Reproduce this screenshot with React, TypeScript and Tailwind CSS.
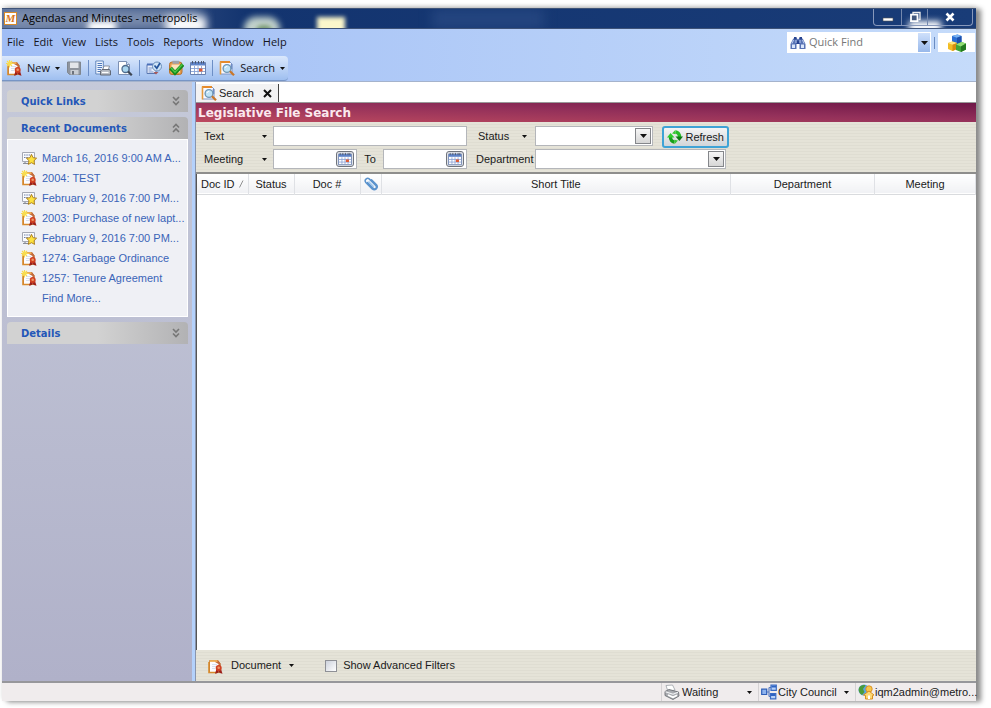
import React from "react";

const menus = ["File", "Edit", "View", "Lists", "Tools", "Reports", "Window", "Help"];

const recent = [
  { kind: "meeting", label: "March 16, 2016 9:00 AM A..." },
  { kind: "doc", label: "2004: TEST" },
  { kind: "meeting", label: "February 9, 2016 7:00 PM..." },
  { kind: "doc", label: "2003: Purchase of new lapt..." },
  { kind: "meeting", label: "February 9, 2016 7:00 PM..." },
  { kind: "doc", label: "1274: Garbage Ordinance" },
  { kind: "doc", label: "1257: Tenure Agreement" },
];

function Caret() {
  return (
    <svg className="h-[3px] w-[5px] shrink-0" viewBox="0 0 5 3">
      <path d="M0 0h5L2.5 3z" fill="#111" />
    </svg>
  );
}

function NewDocIcon({ spark = true }: { spark?: boolean }) {
  return (
    <svg className="size-4 shrink-0" viewBox="0 0 16 16">
      <path d="M2.500 2.500h8l2.500 3v9H2.500z" fill="#fdfcff" stroke="#b9763a" />
      <path d="M2 4v10.500h8" fill="none" stroke="#d88a2c" strokeWidth="1.600" />
      <path d="M8 2h3l2.500 3.500V10h-2V6L8 4z" fill="#c26a3a" />
      <path d="M2.500 3h8" stroke="#efb25a" strokeWidth="1.800" />
      <path d="M5 6.500h5M5 8.500h4M5 10.500h3" stroke="#cdd7ea" strokeWidth=".8" />
      <path d="M9.500 11L8 15.800l2.600-.8 1.200-1.500 1.200 1.500 2.500.8-1.500-4.800z" fill="#9c1f1a" />
      <circle cx="11.700" cy="10" r="3" fill="#cf4022" />
      <circle cx="11.700" cy="9.700" r="1.300" fill="#ee9668" />
      {spark && (
        <g>
          <circle cx="3.500" cy="3.500" r="2.200" fill="#fff6b0" />
          <path d="M3.500 0v7.500M0 3.500h7.500M1 1l5 5M6 1L1 6" stroke="#f8dc4e" strokeWidth="1.100" />
        </g>
      )}
    </svg>
  );
}

function MeetingIcon() {
  return (
    <svg className="size-4 shrink-0" viewBox="0 0 16 16">
      <path d="M1.500 2.500h12v9h-12z" fill="#fafbfd" stroke="#a5a8b2" />
      <path d="M3 5h7M3 7.500h4" stroke="#6c7ea5" strokeDasharray="1.500 .8" />
      <path d="M2 13.500h6M4 12v2" stroke="#8a8d98" strokeWidth="1.200" />
      <path
        d="M10.500 4.300l1.600 3.400 3.500.5-2.600 2.500.6 3.700-3.100-1.700-3.200 1.700.7-3.700-2.600-2.500 3.500-.5z"
        fill="#fde23f"
        stroke="#a8781a"
        strokeWidth=".9"
      />
    </svg>
  );
}

function SaveIcon() {
  return (
    <svg className="size-4 shrink-0" viewBox="0 0 16 16">
      <path d="M1.500 2h13v12.500h-11l-2-2z" fill="#8f959e" stroke="#7f868f" />
      <path d="M4 2.500h8.500V8H4z" fill="#e3e6ea" />
      <path d="M4.500 10h8v4.500h-8z" fill="#c9cdd3" />
      <path d="M6 11h2v3.500H6z" fill="#6c727c" />
    </svg>
  );
}

function PrintDocIcon() {
  return (
    <svg className="size-4 shrink-0" viewBox="0 0 16 16">
      <path d="M.8 1h7.500v13H.8z" fill="#eef4fd" stroke="#6287bd" />
      <path d="M2.500 3.500H7M2.500 5.500H7M2.500 7.500H7M2.500 9.500H6M2.500 11.500H5" stroke="#4f79bb" />
      <path d="M9 6h5.500l-1.500 4.500H7.500z" fill="#fff" stroke="#777e8a" strokeWidth=".8" />
      <path d="M5.500 11l1.500-1.500h7.500l1 1.500v4h-10z" fill="#b4b9c1" stroke="#59606c" strokeWidth=".9" />
      <path d="M7 12.500h6.500" stroke="#fff" strokeWidth="1.200" />
    </svg>
  );
}

function PreviewIcon() {
  return (
    <svg className="size-4 shrink-0" viewBox="0 0 16 16">
      <path d="M1.500 1.500h8l3 3v10h-11z" fill="#fff" stroke="#7c90b3" />
      <path d="M9.500 1.500v3h3" fill="#d7e3f5" stroke="#7d95bd" />
      <circle cx="8.500" cy="9" r="3.500" fill="#a9d6f0" stroke="#4f6c8e" strokeWidth="1.300" />
      <path d="M11 11.500l3.800 3.800" stroke="#3d4654" strokeWidth="2.200" />
    </svg>
  );
}

function SearchDocIcon() {
  return (
    <svg className="size-4 shrink-0" viewBox="0 0 16 16">
      <path d="M1.500 1.500h9l2.500 2.500v10H1.500z" fill="#fbfaff" stroke="#7c95c6" />
      <path d="M1 2h10" stroke="#e58a2a" strokeWidth="2" />
      <path d="M1.500 1.500v13" stroke="#e59a3c" strokeWidth="1.600" />
      <path d="M12.500 4v5" stroke="#6f8cc6" strokeWidth="1.600" />
      <circle cx="8" cy="8.500" r="3.900" fill="#bfe3f7" stroke="#6f97b5" strokeWidth="1.400" />
      <path d="M6 8a2.300 2.300 0 0 1 2.300-1.800" fill="none" stroke="#fff" />
      <path d="M11 11.200L15 15.200" stroke="#c9772a" strokeWidth="2.300" />
    </svg>
  );
}

function ClockCheckIcon() {
  return (
    <svg className="size-4 shrink-0" viewBox="0 0 16 16">
      <path d="M1 4.500h9v9H1z" fill="#e8eefb" stroke="#5a77b0" />
      <path d="M1 4.500h9" stroke="#4a6fb9" strokeWidth="2" />
      <path d="M2.500 8h4M2.500 10h3M2.500 12h5" stroke="#7d97cb" />
      <circle cx="11" cy="6.500" r="4.500" fill="#cfe4f7" stroke="#6a8fb9" />
      <path d="M8.500 5.500l2.300 2.700 3.200-5.200" fill="none" stroke="#24549b" strokeWidth="1.700" />
      <path d="M7.500 12l2.500 2.500 2.500-2.500z" fill="#a85a5a" />
    </svg>
  );
}

function ApproveIcon() {
  return (
    <svg className="size-4 shrink-0" viewBox="0 0 16 16">
      <rect x="1.500" y="2" width="12.500" height="12.500" rx="2.500" fill="#e49a4a" stroke="#b97430" />
      <path d="M3.500 4.500h8.500v8H3.500z" fill="#fbe3bd" />
      <path d="M4.500.8h6.500v3H4.500z" fill="#a0a3ab" />
      <path d="M2.500 8l4.500 5 8-8.500" fill="none" stroke="#178a1e" strokeWidth="3.800" />
      <path d="M3 8l4 4.200 7.500-8" fill="none" stroke="#4cc848" strokeWidth="1.400" />
    </svg>
  );
}

function CalendarIcon({ className = "size-4" }: { className?: string }) {
  return (
    <svg className={"shrink-0 " + className} viewBox="0 0 16 16">
      <path d="M.5 2.500h15v12H.5z" fill="#fff" stroke="#6a80ae" />
      <path d="M1 2.500h14v3H1z" fill="#5d83c9" />
      <path d="M2.500 1v2.500M5.500 1v2.500M8.500 1v2.500M11.500 1v2.500M13.500 1v2.500" stroke="#464e60" strokeWidth=".9" />
      <path d="M1 8.500h14M1 11.500h14M4.500 6v8M8 6v8M11.500 6v8" stroke="#87a0d4" strokeWidth=".9" />
      <path d="M9 8.500h3.500v3H9z" fill="#dd5a35" />
    </svg>
  );
}

function BinocularsIcon() {
  return (
    <svg className="size-4 shrink-0" viewBox="0 0 16 16">
      <path d="M3 4L5.500 2 8 4.500 10.500 2 13 4l2.500 5v5H9.500V9h-3v5H.5V9z" fill="#5873b4" />
      <path d="M4 2h2.500v2.500H4zM9.500 2H12v2.500H9.500zM6.500 5.500h3V9h-3z" fill="#27438f" />
      <path d="M2 9.500h3V13H2zM11 9.500h3V13h-3z" fill="#dbe7fb" />
      <path d="M3.500 5l-1.500 3.500M12.500 5l1.500 3.500M6 5v3M10 5v3" stroke="#b8caee" />
    </svg>
  );
}

function CubesIcon() {
  return (
    <svg className="size-5 shrink-0" viewBox="0 0 20 20">
      <path d="M5 3L10.500 1.500l4 1.500v6.500L10 11l-5-1.500z" fill="#2b6fd4" />
      <path d="M5 3L10.500 1.500l4 1.500L10 4.700z" fill="#7ab2f2" />
      <path d="M10 4.700V11l4.500-1.500V3z" fill="#1b4fac" />
      <path d="M1 10l4.500-1.500L10 10v6l-4.500 2L1 16z" fill="#f2bd25" />
      <path d="M1 10l4.500-1.500L10 10l-4.500 1.800z" fill="#ffe883" />
      <path d="M5.500 11.800V18L10 16v-6z" fill="#d58c12" />
      <path d="M9 11.500l5.500-2.500 4.500 1.500v6L14 19l-5-2z" fill="#3fa535" />
      <path d="M9 11.500l5.500-2.500 4.500 1.500-5 3z" fill="#93dd74" />
      <path d="M14 13.500V19l5-2.500v-6z" fill="#23791f" />
    </svg>
  );
}

function PaperclipIcon() {
  return (
    <svg className="size-4 shrink-0" viewBox="0 0 16 16">
      <path
        d="M4.500 6.500l5.800 5.800c1.800 1.600 4.200-.6 2.700-2.600L6.200 2.900C4.200 1.200.8 4 2.800 6.500l6.400 6.400c2.800 2.400 6.600-1 4.300-4.200L8.500 3.700"
        fill="none"
        stroke="#5b93cd"
        strokeWidth="1.500"
        strokeLinecap="round"
      />
      <path d="M5.500 5.500l5.200 5.200" stroke="#9cc6ee" strokeWidth="1.400" />
    </svg>
  );
}

function RefreshIcon() {
  return (
    <svg className="size-4 shrink-0" viewBox="0 0 16 16">
      <path d="M7.500 13.200A5 5 0 0 1 3.500 8" fill="none" stroke="#16a01a" strokeWidth="3.400" />
      <path d="M8.500 2.800A5 5 0 0 1 12.500 8" fill="none" stroke="#28bd28" strokeWidth="3.400" />
      <path d="M0 8.500L3.600 4l3.900 4.500z" fill="#2ccc2c" />
      <path d="M8.500 7.500l3.900 4.500L16 7.500z" fill="#0d7a13" />
      <path d="M5 4.500L8.500.8v4.400zM11 11.500l-3.500 3.700v-4.400z" fill="#39c836" />
    </svg>
  );
}

function PrinterIcon() {
  return (
    <svg className="size-4 shrink-0" viewBox="0 0 16 16">
      <path d="M2 1.500L8.500 1 11 6 4 7.500z" fill="#fff" stroke="#9b9fa6" strokeWidth=".8" />
      <path d="M1 7.500l4-2 9.500 2.500.5 4-6 3.500-8-4z" fill="#a9abb0" stroke="#6d7076" strokeWidth=".9" />
      <path d="M1.500 7.700L9 10.200l5-2" fill="none" stroke="#f4f5f7" strokeWidth="1.200" />
      <path d="M4 11l5 2.200 4-2" fill="none" stroke="#fff" strokeWidth="1.800" />
    </svg>
  );
}

function OrgIcon() {
  return (
    <svg className="size-4 shrink-0" viewBox="0 0 16 16">
      <path d="M5 8h3M8 3.500v9M8 3.500h2M8 12.500h2" fill="none" stroke="#5a7cc0" strokeWidth="1.200" />
      <path d="M.7 5.200h5v5.300h-5z" fill="#8fb4ee" stroke="#2f5fb8" strokeWidth="1.200" />
      <path d="M10 1h5.300v5.300H10zM9.500 9.500h5.300v5.300H9.500z" fill="#b9d2f8" stroke="#3a6bc3" strokeWidth="1.200" />
      <path d="M10.500 1.500h4.500v2h-4.500zM10 10h4.500v2H10z" fill="#2f63c2" />
    </svg>
  );
}

function UserGlobeIcon() {
  return (
    <svg className="size-4 shrink-0" viewBox="0 0 16 16">
      <circle cx="6" cy="6" r="5.500" fill="#5ba6e2" />
      <path d="M1 4C2.500 1 6 .5 7.500 1.500L5 5l1.500 3L4 11C1.500 9.500 0 6.500 1 4z" fill="#4a9c3a" />
      <circle cx="11" cy="5" r="3.200" fill="#f7c64a" stroke="#d78b1c" strokeWidth=".9" />
      <path d="M5.500 11L11 7l5 4-1.500.5v3.500h-7v-3.500z" fill="#fbd873" stroke="#d98f1e" />
      <path d="M10 11.500h2V15h-2z" fill="#fff" />
    </svg>
  );
}

function Chevrons({ up = false }: { up?: boolean }) {
  return (
    <svg className="h-3 w-2 shrink-0" viewBox="0 0 8 12">
      <path
        d={up ? "M1 5.500l3-3 3 3M1 10l3-3 3 3" : "M1 2l3 3 3-3M1 6.500l3 3 3-3"}
        fill="none"
        stroke="#777"
        strokeWidth="1.600"
      />
    </svg>
  );
}

function PanelHeader({ title, open = false }: { title: string; open?: boolean }) {
  return (
    <button className="flex h-[22px] w-full items-center justify-between rounded-t-sm bg-linear-to-r from-[#d2d2d2] from-50% to-[#b2b2b4] pl-[14px] pr-2 font-['DejaVu_Sans'] text-[10px] font-bold text-[#2457b8]">
      {title}
      <Chevrons up={open} />
    </button>
  );
}

function Separator() {
  return <span className="h-4 w-px shrink-0 bg-[#6d8fc6]" />;
}

function ToolButton({ label, children }: { label: string; children: React.ReactNode }) {
  return (
    <button aria-label={label} title={label}>
      {children}
    </button>
  );
}

function LabelMenu({ label }: { label: string }) {
  return (
    <button className="flex w-full items-center justify-between">
      {label}
      <Caret />
    </button>
  );
}

function DropDown({ label, className }: { label: string; className: string }) {
  return (
    <div className={"relative h-5 " + className}>
      <select
        aria-label={label}
        className="h-full w-full appearance-none border border-[#b4b6ba] bg-white"
      >
        <option></option>
      </select>
      <span className="pointer-events-none absolute inset-y-[2px] right-[2px] flex w-4 items-center justify-center border border-[#84868a] bg-linear-to-b from-[#f6f6f6] to-[#d6d6d6]">
        <svg className="h-1 w-[7px]" viewBox="0 0 7 4">
          <path d="M0 0h7L3.500 4z" fill="#111" />
        </svg>
      </span>
    </div>
  );
}

function DateBox({ label }: { label: string }) {
  return (
    <div className="flex h-5 w-[84px] items-center border border-[#b4b6ba] bg-white pr-[2px]">
      <input aria-label={label} className="h-full w-0 flex-1 px-1 outline-none" />
      <button
        aria-label={"Pick " + label}
        className="flex h-4 w-[18px] items-center justify-center rounded-[3px] border border-[#70747c] bg-[#dfe2e8]"
      >
        <CalendarIcon className="size-[14px]" />
      </button>
    </div>
  );
}

function TitleBar() {
  return (
    <header className="relative flex h-[21px] items-center overflow-hidden border-y border-[#3e5378] bg-linear-to-r from-[#5f749c] via-[#13346f] via-25% to-[#193c78]">
      <span className="absolute top-0 left-2 h-5 w-48 bg-[#8393b2]/90 blur-[6px]" />
      <span className="absolute top-3 left-[86px] h-3 w-7 bg-white blur-[3px]" />
      <span className="absolute top-2 left-[164px] h-4 w-10 bg-white blur-[4px]" />
      <span className="absolute top-2 left-[242px] h-6 w-9 rounded-full bg-[#c3d2cc] blur-[3px]" />
      <span className="absolute top-4 left-[254px] h-3 w-4 rounded-full bg-[#7a9b74] blur-[2px]" />
      <span className="absolute top-2 left-[315px] h-4 w-7 bg-[#fbf7cb] blur-[2px]" />
      <span className="absolute top-0 left-[430px] h-5 w-28 bg-[#24457f] blur-[6px]" />
      <span className="relative ml-[2px] flex size-[13px] items-center justify-center border border-[#d98b2a] bg-white font-['Liberation_Serif'] text-[11px] leading-none font-bold text-[#d9761a] italic">
        M
      </span>
      <h1 className="relative ml-[5px] text-[11px] text-black">Agendas and Minutes - metropolis</h1>
      <div className="relative mr-[3px] ml-auto flex h-full items-start">
        <span className="absolute top-3 left-9 h-3 w-8 bg-white blur-[3px]" />
        <div className="relative flex h-[17px] divide-x divide-[#7488ae] rounded-b border border-t-0 border-[#8798bb]">
          <button aria-label="Minimize" className="flex w-7 items-center justify-center">
            <svg className="h-3 w-3" viewBox="0 0 12 12">
              <path d="M1 7h10v3H1z" fill="#fff" stroke="#555" strokeWidth=".6" />
            </svg>
          </button>
          <button aria-label="Restore" className="flex w-[26px] items-center justify-center">
            <svg className="h-3 w-3" viewBox="0 0 12 12">
              <path d="M4 3V1.500h7v7H9.500" fill="none" stroke="#eee" strokeWidth="1.300" />
              <path d="M2 3.700h6.500v6.500H2z" fill="#43597f" stroke="#fff" strokeWidth="1.800" />
            </svg>
          </button>
          <button aria-label="Close" className="flex w-[44px] items-center justify-center">
            <svg className="h-3 w-3" viewBox="0 0 12 12">
              <path d="M2.500 2.500l7 7M9.500 2.500l-7 7" stroke="#fff" strokeWidth="2.600" />
            </svg>
          </button>
        </div>
      </div>
    </header>
  );
}

function TopBars() {
  return (
    <div className="flex h-[53px] items-start justify-between border-b border-[#a5b3cc] bg-linear-to-r from-[#a0bdf5] to-[#c5dbfa]">
      <div>
        <nav className="flex h-[27px] items-center gap-[9px] pl-[5px] text-[11px] text-[#15151c]">
          {menus.map((name) => (
            <button key={name}>{name}</button>
          ))}
        </nav>
        <div className="flex h-[25px] w-[286px] items-center justify-between rounded-r border-b border-[#7795c5] bg-linear-to-b from-[#dbe8fc] to-[#9fbff0] pr-[3px] pl-1 text-[11px] text-[#15151c]">
          <button className="flex items-center gap-[5px]">
            <NewDocIcon />
            New
            <Caret />
          </button>
          <ToolButton label="Save">
            <SaveIcon />
          </ToolButton>
          <Separator />
          <ToolButton label="Print">
            <PrintDocIcon />
          </ToolButton>
          <ToolButton label="Preview">
            <PreviewIcon />
          </ToolButton>
          <Separator />
          <ToolButton label="Schedule">
            <ClockCheckIcon />
          </ToolButton>
          <ToolButton label="Approve">
            <ApproveIcon />
          </ToolButton>
          <ToolButton label="Calendar">
            <CalendarIcon />
          </ToolButton>
          <Separator />
          <button className="flex items-center gap-[5px]">
            <SearchDocIcon />
            Search
            <Caret />
          </button>
        </div>
      </div>
      <div className="mt-[3px] mr-px flex items-center gap-[3px]">
        <div className="flex h-[21px] w-[144px] items-center bg-white p-px pl-[3px]">
          <BinocularsIcon />
          <input
            aria-label="Quick Find"
            placeholder="Quick Find"
            className="w-0 flex-1 pl-[3px] text-[11px] outline-none placeholder:text-[#777]"
          />
          <button
            aria-label="Quick Find options"
            className="flex h-full w-3 items-center justify-center bg-linear-to-b from-[#cfe0fb] to-[#98b8ea]"
          >
            <svg className="h-1 w-[7px]" viewBox="0 0 7 4">
              <path d="M0 0h7L3.500 4z" fill="#111" />
            </svg>
          </button>
        </div>
        <span className="h-3 w-px bg-[#6a8cc2]" />
        <button aria-label="Modules" className="flex h-[19px] w-[37px] items-center justify-center bg-white">
          <CubesIcon />
        </button>
      </div>
    </div>
  );
}

function Sidebar() {
  return (
    <aside className="flex w-[190px] shrink-0 flex-col gap-[5px] bg-linear-to-b from-[#c5c9d9] to-[#b0b1c9] pt-2 pr-1 pl-[5px]">
      <PanelHeader title="Quick Links" />
      <section>
        <PanelHeader title="Recent Documents" open />
        <ul className="border border-white bg-[#eff0f5] pt-2 pb-2 pl-[13px] text-[11px] text-[#3a64b8]">
          {recent.map((item, i) => (
            <li key={i} className="flex h-5 items-center gap-[5px]">
              {item.kind === "doc" ? <NewDocIcon /> : <MeetingIcon />}
              <a href="#" className="whitespace-nowrap">
                {item.label}
              </a>
            </li>
          ))}
          <li className="flex h-5 items-center pl-[21px]">
            <a href="#">Find More...</a>
          </li>
        </ul>
      </section>
      <PanelHeader title="Details" />
    </aside>
  );
}

function Filters() {
  return (
    <div className="flex h-[52px] items-start border-b-2 border-[#8e8e8c] bg-[repeating-linear-gradient(#e5e3d8_0_2px,#dfddd2_2px_3px)] pt-1 pl-2">
      <div className="grid w-[263px] grid-cols-[63px_1fr] items-center gap-x-[6px] gap-y-[3px]">
        <LabelMenu label="Text" />
        <input aria-label="Text" className="h-5 w-full border border-[#b4b6ba] bg-white px-1 outline-none" />
        <LabelMenu label="Meeting" />
        <div className="flex items-center justify-between">
          <DateBox label="meeting from" />
          <span>To</span>
          <DateBox label="meeting to" />
        </div>
      </div>
      <div className="ml-[9px] grid grid-cols-[56px_1fr] items-center gap-x-[3px] gap-y-[3px]">
        <div className="w-[51px] pl-[2px]">
          <LabelMenu label="Status" />
        </div>
        <div className="flex h-5 items-center gap-[9px]">
          <DropDown label="Status" className="w-[118px]" />
          <button className="mt-[2px] flex h-[22px] w-[67px] items-center justify-between rounded-[3px] border-2 border-[#3fa3d6] bg-linear-to-b from-[#f4f4f4] to-[#d2d5d8] px-[3px]">
            <RefreshIcon />
            Refresh
          </button>
        </div>
        <span>Department</span>
        <DropDown label="Department" className="w-[191px]" />
      </div>
    </div>
  );
}

function Results() {
  return (
    <div className="flex-1 border-l border-[#555] bg-white">
      <table className="w-full table-fixed">
        <thead>
          <tr className="h-5 border-b border-[#d9dbde] bg-linear-to-b from-white to-[#f0f1f4] [&>th]:border-r [&>th]:border-[#dfe1e5] [&>th]:p-0 [&>th]:font-normal">
            <th className="w-[51px]">
              <span className="flex items-center justify-center gap-1">
                Doc ID
                <svg className="h-2 w-[5px]" viewBox="0 0 5 8">
                  <path d="M.5 7.500L4 .5" stroke="#777" strokeWidth=".8" />
                </svg>
              </span>
            </th>
            <th className="w-[46px]">Status</th>
            <th className="w-[66px]">Doc #</th>
            <th className="w-[21px]" aria-label="Attachments">
              <span className="flex justify-center">
                <PaperclipIcon />
              </span>
            </th>
            <th>Short Title</th>
            <th className="w-[144px]">Department</th>
            <th className="w-[101px]">Meeting</th>
          </tr>
        </thead>
        <tbody></tbody>
      </table>
    </div>
  );
}

function StatusBar() {
  return (
    <footer className="flex h-5 items-center justify-end border-t-2 border-[#97979b] bg-[#f0eced] font-['Liberation_Sans',sans-serif] text-[11px] text-[#1a1a1a]">
      <button className="flex h-full w-[97px] items-center gap-[2px] border-l border-[#d5d2d4] pr-[6px] pl-[2px]">
        <PrinterIcon />
        <span className="mr-auto">Waiting</span>
        <Caret />
      </button>
      <button className="flex h-full w-[97px] items-center gap-px border-l border-[#d5d2d4] pr-[6px] pl-[2px]">
        <OrgIcon />
        <span className="mr-auto whitespace-nowrap">City Council</span>
        <Caret />
      </button>
      <div className="flex h-full w-[121px] items-center gap-px border-l border-[#d5d2d4] pl-[2px]">
        <UserGlobeIcon />
        <span>iqm2admin@metro...</span>
      </div>
    </footer>
  );
}

function App() {
  return (
    <div className="flex min-h-screen flex-col bg-white pt-2 pr-[15px] pb-[7px] pl-[2px] font-['Open_Sans',sans-serif]">
      <div className="flex flex-1 flex-col shadow-[5px_1px_5px_#8a8a8a,0_-2px_4px_#ddd]">
        <TitleBar />
        <TopBars />
        <div className="flex flex-1 font-['Liberation_Sans',sans-serif] text-[11px] text-[#1a1a1a]">
          <Sidebar />
          <div className="w-1 border-r border-[#8895ae] bg-[#b4d1fb]" />
          <main className="flex min-w-0 flex-1 flex-col">
            <div className="flex h-[21px] items-end border-b border-[#999] bg-white">
              <div className="flex h-[18px] items-center border-r border-[#444] bg-[#f2f2f3] pr-[6px] pl-[5px]">
                <SearchDocIcon />
                <span className="pl-[2px]">Search</span>
                <button aria-label="Close tab" className="ml-[9px]">
                  <svg className="size-[9px]" viewBox="0 0 9 9">
                    <path d="M1 1l7 7M8 1L1 8" stroke="#111" strokeWidth="2" />
                  </svg>
                </button>
              </div>
            </div>
            <h2 className="flex h-[19px] items-center bg-[linear-gradient(to_bottom_left,#6f1748,#93305a_45%,#bd4a5f)] pl-[2px] font-['DejaVu_Sans'] text-xs font-bold text-[#fbe9ee]">
              Legislative File Search
            </h2>
            <Filters />
            <Results />
            <div className="flex h-[31px] items-center bg-[repeating-linear-gradient(#e5e3d8_0_2px,#dfddd2_2px_3px)] pl-[11px]">
              <button className="flex items-center gap-2">
                <NewDocIcon spark={false} />
                Document
                <Caret />
              </button>
              <label className="ml-[31px] flex items-center gap-[6px]">
                <input
                  type="checkbox"
                  className="size-3 appearance-none border border-[#8e9096] bg-linear-to-br from-[#cdd2dc] to-white"
                />
                Show Advanced Filters
              </label>
            </div>
          </main>
        </div>
        <StatusBar />
      </div>
    </div>
  );
}

export default App;
